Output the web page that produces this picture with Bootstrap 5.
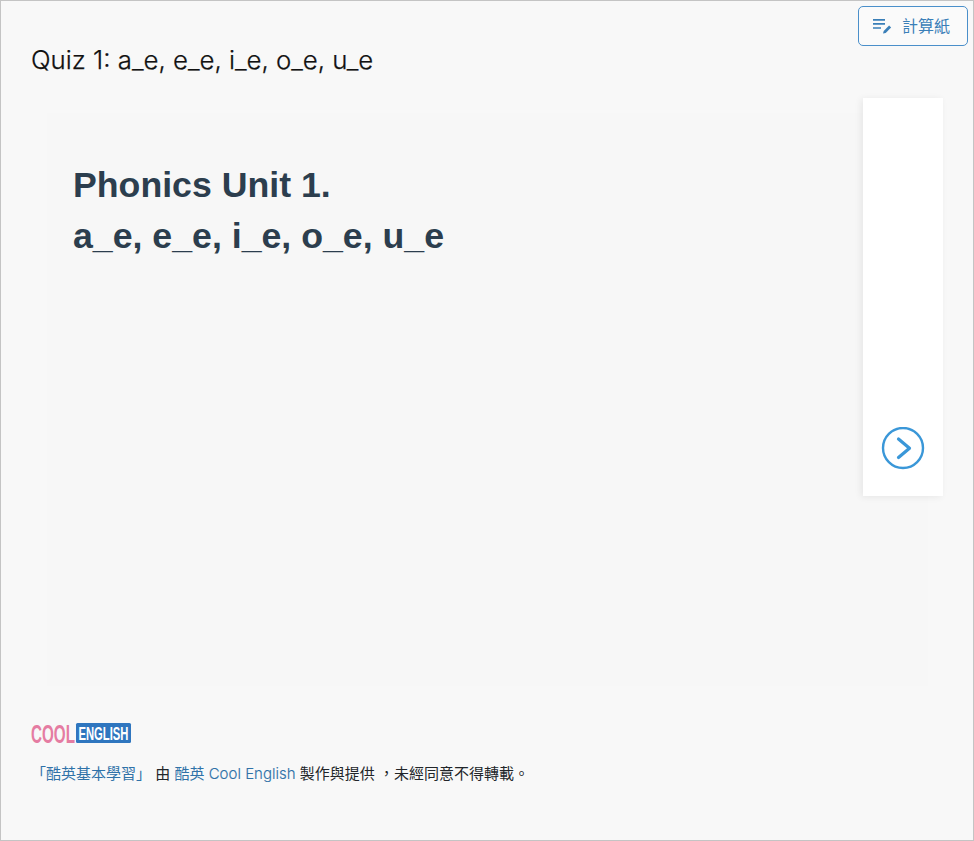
<!DOCTYPE html>
<html lang="zh-Hant">
<head>
<meta charset="utf-8">
<title>Quiz 1</title>
<link href="https://cdn.jsdelivr.net/npm/bootstrap@5.3.0/dist/css/bootstrap.min.css" rel="stylesheet">
<style>
html,body{height:100%;margin:0}
body{background:#f8f8f8;font-family:Inter,"Noto Sans CJK JP",sans-serif;color:#212529}
.frame{height:841px;border:1px solid #c4c4c4;overflow:hidden;background:#f8f8f8}
.topbar{padding:5px 5px 0 0;height:45px}
.note-btn{width:110px;height:40px;padding:0 0 0 14px;border:1px solid #4a8fca;border-radius:5px;color:#3a7fb8;background:#fafafa;font-size:16px;line-height:1;gap:10px}
.note-btn svg{width:20px;height:20px;flex:none}
.note-btn span{margin-left:-1px}
.quiz-title{font-size:25.8px;font-weight:300;-webkit-text-stroke:.25px #111;line-height:30px;margin:-1px 0 0;padding:0 0 0 30px;color:#111;height:53px}
.stage{position:relative;height:587px}
.sheet{position:absolute;left:46px;top:15px;width:881px;height:573px;background:#f7f7f7}
.slide-head{font-family:"Liberation Sans",Arial,sans-serif;font-weight:700;font-size:35.7px;line-height:51px;color:#2c3e4e;margin:0;padding:47px 0 0 26px}
.side{position:absolute;left:862px;top:0;width:80px;height:398px;background:#fff;box-shadow:-2px 1px 7px rgba(0,0,0,.07)}
.next{position:absolute;left:18px;top:329px;width:44px;height:44px;padding:0;border:0;background:none;display:block}
.foot{padding:34px 0 0 30px}
.foot svg{display:block;width:100px;height:28px;overflow:visible}
.foot-line{font-size:15px;line-height:22px;margin:16px 0 0;color:#212529}
.foot-line a{color:#2f72a8;text-decoration:none}
.latin{font-weight:300;-webkit-text-stroke:.15px #2f72a8}
</style>
</head>
<body>
<div class="frame">
  <div class="topbar d-flex justify-content-end">
    <button type="button" class="btn note-btn d-flex align-items-center justify-content-start">
      <svg viewBox="0 0 20 20" fill="none" stroke="#3a7fb8" stroke-width="1.7" aria-hidden="true"><path d="M0 3.800h12M0 7.800h12M0 12h8"/><path d="M10 17.500l.7-2.600 5.400-5.300 2 2-5.400 5.300z" fill="#3a7fb8" stroke="none"/></svg>
      <span>計算紙</span>
    </button>
  </div>
  <h1 class="quiz-title">Quiz 1: a_e, e_e, i_e, o_e, u_e</h1>
  <div class="stage">
    <div class="sheet">
      <h2 class="slide-head">Phonics Unit 1.<br>a_e, e_e, i_e, o_e, u_e</h2>
    </div>
    <div class="side">
      <button type="button" class="next" aria-label="next">
        <svg width="44" height="44" viewBox="0 0 44 44" fill="none" stroke="#3a97d8" aria-hidden="true"><circle cx="22" cy="21" r="20" stroke-width="2.400"/><path d="M17.500 12l11 9.200-11 9.300" stroke-width="3.200" stroke-linecap="round" stroke-linejoin="round"/></svg>
      </button>
    </div>
  </div>
  <div class="foot">
    <svg viewBox="0 -4 100 28" role="img" aria-label="Cool English">
      <rect x="45" y="0" width="55" height="20" rx="1.500" fill="#2f76bf"/>
      <text transform="translate(0 19.500) scale(.586 1)" font-family="'Liberation Sans',sans-serif" font-size="26" font-weight="700" fill="#e57ca2">COOL</text>
      <text transform="translate(47.500 17) scale(.592 1)" font-family="'Liberation Sans',sans-serif" font-size="19" font-weight="700" fill="#fff">ENGLISH</text>
    </svg>
    <p class="foot-line"><a href="#">「酷英基本學習」</a> 由 <a href="#">酷英 <span class="latin">Cool English</span></a> 製作與提供 ，未經同意不得轉載。</p>
  </div>
</div>
<script src="https://cdn.jsdelivr.net/npm/bootstrap@5.3.0/dist/js/bootstrap.bundle.min.js"></script>
</body>
</html>
